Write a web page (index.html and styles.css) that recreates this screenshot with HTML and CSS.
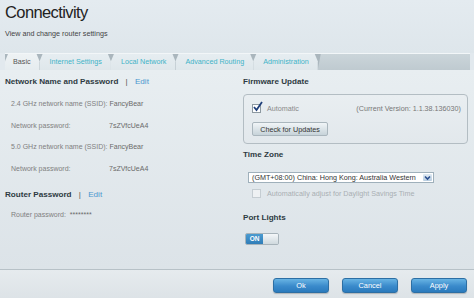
FILE: index.html
```html
<!DOCTYPE html>
<html lang="en">
<head>
    <meta charset="UTF-8">
    <meta name="viewport" content="width=device-width, initial-scale=1.0">
    <title>Connectivity</title>
    <link rel="stylesheet" href="styles.css">
</head>
<body>
    <div class="header">
        <h1>Connectivity</h1>
        <p class="subtitle">View and change router settings</p>
    </div>

    <div class="tabs">
        <div class="tab active">Basic</div>
        <div class="tab">Internet Settings</div>
        <div class="tab">Local Network</div>
        <div class="tab">Advanced Routing</div>
        <div class="tab">Administration</div>
        <div class="tab-fill"></div>
    </div>

    <div class="main">
        <div class="col left">
            <h2>Network Name and Password <span class="sep">|</span> <a href="#" class="edit">Edit</a></h2>
            <div class="row"><span class="label">2.4 GHz network name (SSID):</span><span class="value">FancyBear</span></div>
            <div class="row"><span class="label">Network password:</span><span class="value">7sZVfcUeA4</span></div>
            <div class="row"><span class="label">5.0 GHz network name (SSID):</span><span class="value">FancyBear</span></div>
            <div class="row"><span class="label">Network password:</span><span class="value">7sZVfcUeA4</span></div>

            <h2 class="second">Router Password <span class="sep">|</span> <a href="#" class="edit">Edit</a></h2>
            <div class="row short"><span class="label auto">Router password:</span><span class="value">********</span></div>
        </div>

        <div class="col right">
            <h2>Firmware Update</h2>
            <div class="box">
                <div class="check-row">
                    <span class="checkbox">
                        <svg width="11" height="11" viewBox="0 0 11 11"><path d="M2 6 L4.5 9 L10 1" fill="none" stroke="#1f3f7a" stroke-width="1.8"/></svg>
                    </span>
                    <span class="check-label">Automatic</span>
                    <span class="version">(Current Version: 1.1.38.136030)</span>
                </div>
                <button class="btn-gray">Check for Updates</button>
            </div>

            <h2 class="tz">Time Zone</h2>
            <div class="select">
                <span class="select-text">(GMT+08:00) China: Hong Kong: Australia Western</span>
                <span class="arrow">
                    <svg width="7" height="6" viewBox="0 0 7 6"><path d="M1 1.5 L3.5 4 L6 1.5" fill="none" stroke="#2a4f8f" stroke-width="1.6"/></svg>
                </span>
            </div>
            <div class="check-row dst">
                <span class="checkbox disabled"></span>
                <span class="check-label">Automatically adjust for Daylight Savings Time</span>
            </div>

            <h2 class="ports">Port Lights</h2>
            <div class="toggle">
                <span class="on">ON</span>
                <span class="knob"></span>
            </div>
        </div>
    </div>

    <div class="footer">
        <button class="btn-blue">Ok</button>
        <button class="btn-blue">Cancel</button>
        <button class="btn-blue">Apply</button>
    </div>
</body>
</html>
```

FILE: styles.css
```css
body {
    margin: 0;
    width: 474px;
    height: 298px;
    overflow: hidden;
    font-family: "Liberation Sans", Arial, sans-serif;
    font-size: 7.2px;
    color: #777;
    background: #e2e9ee;
}
.header {
    height: 53px;
    box-sizing: border-box;
    padding: 3px 5px 0;
    background: linear-gradient(#e4ebf0, #dee6eb);
}
h1 {
    margin: 0;
    font-size: 16.5px;
    line-height: 18px;
    letter-spacing: -0.6px;
    font-weight: normal;
    color: #222;
}
.subtitle {
    margin: 8px 0 0;
    line-height: 10px;
    color: #444;
}
.tabs {
    display: flex;
    height: 17px;
    margin: 0 4px 0 5px;
    background: #aab6bd;
    border-top: 1px solid #f2f6f8;
    box-sizing: border-box;
}
.tab {
    padding: 0 9px 0 10px;
    line-height: 16px;
    color: #3fb3c7;
    background: linear-gradient(#e6edf1, #dfe7eb);
    clip-path: polygon(3px 0, calc(100% - 3px) 0, 100% 45%, 100% 100%, 0 100%, 0 45%);
}
.tab.active {
    padding: 0 9px 0 8px;
    color: #555;
    background: linear-gradient(#eef2f4, #e6ecef);
}
.tab-fill {
    flex: 1;
    background: linear-gradient(#cbd5da, #bfcad0);
    clip-path: polygon(3px 0, 100% 0, 100% 100%, 0 100%);
}
.main {
    display: flex;
    height: 199px;
    box-sizing: border-box;
    padding-top: 1px;
    background: linear-gradient(#e8eef1, #dce3e8);
}
.col.left {
    width: 243px;
    padding-left: 5px;
    box-sizing: border-box;
}
.col.right {
    width: 225px;
}
h2 {
    margin: 0;
    font-size: 8.1px;
    line-height: 22px;
    color: #2e3a42;
}
h2.second {
    margin-top: 5px;
}
.sep {
    margin: 0 5px;
    font-weight: normal;
    color: #555;
}
.edit {
    font-weight: normal;
    color: #4b97cf;
    text-decoration: none;
}
.row {
    display: flex;
    padding-left: 6px;
    font-size: 7px;
    line-height: 21.5px;
    white-space: nowrap;
}
.row.short {
    line-height: 18px;
}
.label {
    flex: 0 0 auto;
    min-width: 96px;
    margin-right: 2px;
    color: #808080;
}
.label.auto {
    min-width: 0;
    margin-right: 4px;
}
.value {
    color: #6a6a6a;
}
.box {
    margin-top: 1px;
    padding: 7px 6px 7px 8px;
    border: 1px solid #b3bdc3;
    border-radius: 4px;
    background: linear-gradient(#e9eef1, #e2e8ec);
}
.check-row {
    display: flex;
    align-items: center;
    height: 12px;
}
.checkbox {
    position: relative;
    width: 7px;
    height: 7px;
    margin-right: 6px;
    border: 1px solid #8d99a1;
    background: #fff;
}
.checkbox svg {
    position: absolute;
    left: -1px;
    top: -4px;
}
.checkbox.disabled {
    border-color: #c5cdd2;
    background: #eef1f3;
}
.check-label {
    color: #8a8a8a;
}
.version {
    margin-left: auto;
    color: #777;
}
.btn-gray {
    display: block;
    width: 76px;
    height: 14px;
    margin-top: 8px;
    padding: 0;
    font-family: inherit;
    font-size: 7.2px;
    color: #333;
    border: 1px solid #aab6bd;
    border-radius: 2px;
    background: linear-gradient(#f1f5f7, #c7d3d9);
}
h2.tz {
    margin-top: 2px;
    line-height: 18px;
}
.select {
    display: flex;
    align-items: center;
    justify-content: space-between;
    width: 186px;
    height: 11px;
    margin: 8px 0 0 5px;
    padding: 0 1px 0 3px;
    box-sizing: border-box;
    border: 1px solid #9fb0bb;
    background: #fff;
    line-height: 9px;
}
.select-text {
    color: #333;
}
.arrow {
    display: flex;
    align-items: center;
    justify-content: center;
    width: 9px;
    height: 7px;
    background: linear-gradient(#dfeaf3, #b8cde0);
    border-radius: 1px;
}
.dst {
    margin: 4px 0 0 9px;
}
.dst .check-label {
    color: #a9afb3;
}
h2.ports {
    margin-top: 8px;
}
.toggle {
    display: flex;
    width: 34px;
    height: 12px;
    margin: 4px 0 0 2px;
    box-sizing: border-box;
    border: 1px solid #a7b3ba;
    border-radius: 2px;
    overflow: hidden;
}
.on {
    width: 17px;
    font-size: 6.5px;
    font-weight: bold;
    line-height: 10px;
    text-align: center;
    color: #fff;
    background: linear-gradient(#4b9bd0, #2f7db8);
}
.knob {
    flex: 1;
    background: linear-gradient(#f4f7f9, #cfd9de);
}
.footer {
    display: flex;
    justify-content: flex-end;
    gap: 13px;
    height: 29px;
    box-sizing: border-box;
    padding: 8px 7px 0 0;
    border-top: 1px solid #b7c1c7;
    background: linear-gradient(#e6ebee, #dde3e7);
}
.btn-blue {
    width: 56px;
    height: 15px;
    padding: 0;
    font-family: inherit;
    font-size: 7.4px;
    color: #fff;
    border: 1px solid #2d6fa4;
    border-radius: 3px;
    background: linear-gradient(#68b4e4, #3a8acb 55%, #2b7bbd);
    box-shadow: 0 1px 1px rgba(0,0,0,0.2);
}
```
